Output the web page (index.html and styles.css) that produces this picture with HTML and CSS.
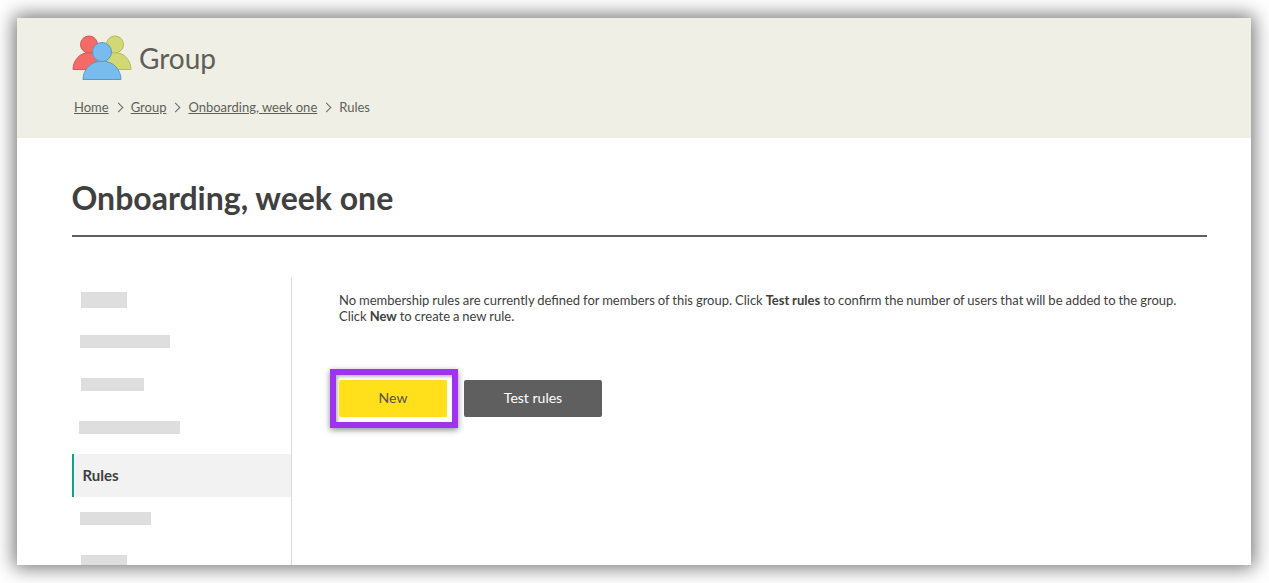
FILE: index.html
```html
<!DOCTYPE html>
<html lang="en">
<head>
<meta charset="utf-8">
<title>Rules</title>
<link rel="stylesheet" href="styles.css">
</head>
<body>
<div class="panel">
  <header class="band">
    <div class="brand">
      <svg class="brand-icon" width="61" height="46" viewBox="0 0 61 46">
        <g class="olive">
          <path d="M27 34.500A16 17 0 0 1 59 34.500Z"/>
          <circle cx="43" cy="9.500" r="8.500"/>
        </g>
        <g class="red">
          <path d="M1 34.500A16 17 0 0 1 33 34.500Z"/>
          <circle cx="17" cy="9.500" r="8.500"/>
        </g>
        <g class="blue">
          <path d="M11 44.500A19 18.500 0 0 1 49 44.500Z"/>
          <circle cx="30" cy="17" r="9.500"/>
        </g>
      </svg>
      <span class="brand-name">Group</span>
    </div>
    <nav class="crumbs">
      <a href="#">Home</a><span class="sep"></span>
      <a href="#">Group</a><span class="sep"></span>
      <a href="#">Onboarding, week one</a><span class="sep"></span>
      <span>Rules</span>
    </nav>
  </header>
  <main class="content">
    <h1 class="title">Onboarding, week one</h1>
    <div class="columns">
      <aside class="side">
        <div class="side-row"><span class="ph ph-a"></span></div>
        <div class="side-row"><span class="ph ph-b"></span></div>
        <div class="side-row"><span class="ph ph-c"></span></div>
        <div class="side-row"><span class="ph ph-d"></span></div>
        <div class="side-row active">Rules</div>
        <div class="side-row below"><span class="ph ph-e"></span></div>
        <div class="side-row below"><span class="ph ph-f"></span></div>
      </aside>
      <section class="body">
        <p class="intro">No membership rules are currently defined for members of this group. Click <b>Test rules</b> to confirm the number of users that will be added to the group. Click <b>New</b> to create a new rule.</p>
        <div class="actions">
          <span class="focus"><button class="btn btn-new" type="button">New</button></span>
          <button class="btn btn-test" type="button">Test rules</button>
        </div>
      </section>
    </div>
  </main>
</div>
</body>
</html>
```
FILE: styles.css
```css
* { box-sizing: border-box; }
html, body { height: 100%; }
body {
  margin: 0;
  padding: 18px 18px 18px 17px;
  background: #fff;
  font-family: Lato, "Liberation Sans", sans-serif;
  color: #404040;
  overflow: hidden;
}
.panel {
  height: 547px;
  background: #fff;
  box-shadow: 0 0 18px 3px rgba(0, 0, 0, .55);
  overflow: hidden;
}
.band {
  height: 120px;
  background: #f0efe6;
  padding: 17px 55px 0;
}
.brand { display: flex; align-items: center; gap: 6px; height: 46px; }
.brand-icon { flex: none; }
.brand-icon .red { fill: #f36a66; stroke: #d25a58; }
.brand-icon .olive { fill: #d3d877; stroke: #b5bb57; }
.brand-icon .blue { fill: #78bbed; stroke: #5b98c9; }
.brand-name { font-size: 28px; color: #5f5f5a; }
.crumbs {
  display: flex;
  align-items: center;
  margin-top: 18px;
  padding-left: 2px;
  font-size: 13px;
  color: #5f5f5a;
}
.crumbs a { color: #5f5f5a; text-decoration: underline; }
.sep {
  width: 7px;
  height: 7px;
  margin: 0 9px 0 6px;
  border-top: 1px solid #666;
  border-right: 1px solid #666;
  transform: rotate(45deg);
}
.content { padding: 0 44px 0 55px; }
.title {
  margin: 0;
  height: 99px;
  padding-top: 39px;
  font-size: 32px;
  font-weight: 700;
  line-height: 42px;
  text-indent: -.5px;
  color: #404040;
  border-bottom: 2px solid #5f5f5f;
}
.columns { display: flex; margin-top: 40px; }
.side {
  width: 220px;
  flex: none;
  height: 300px;
  padding-top: 5px;
  border-right: 1px solid #d9d9d9;
}
.side-row { height: 43px; display: flex; align-items: flex-start; padding: 10px 0 0 9px; }
.side-row.below { padding-top: 15px; }
.side-row.active {
  align-items: center;
  padding: 0 0 2px 8.500px;
  background: #f2f2f2;
  border-left: 2px solid #1f9c88;
  font-size: 15px;
  font-weight: 700;
  color: #404040;
}
.ph { display: block; height: 13px; background: #dedede; }
.ph-a { width: 46px; height: 16px; }
.ph-b { width: 90px; margin-left: -1px; }
.ph-c { width: 63px; }
.ph-d { width: 101px; margin-left: -2px; }
.ph-e { width: 71px; margin-left: -1px; }
.ph-f { width: 46px; height: 16px; }
.body { flex: 1; padding: 15px 25px 0 47px; }
.intro { margin: 0; font-size: 13px; line-height: 16px; word-spacing: -.4px; color: #404040; }
.actions { display: flex; align-items: center; gap: 6px; margin-top: 45px; margin-left: -9px; }
.focus {
  display: block;
  padding: 5px 5px 5px 3px;
  border: 6px solid #a033f0;
  box-shadow: 0 2px 6px rgba(0, 0, 0, .45), inset 2px 2px 3px rgba(0, 0, 0, .25);
  background: #fff;
}
.btn {
  display: block;
  height: 37px;
  padding: 0 0 2px;
  border: 0;
  border-radius: 2px;
  font-family: inherit;
  font-size: 14px;
}
.btn-new { width: 108px; background: #ffe01a; color: #55514a; }
.btn-test { width: 138px; background: #5f5f5f; color: #fff; }
```
